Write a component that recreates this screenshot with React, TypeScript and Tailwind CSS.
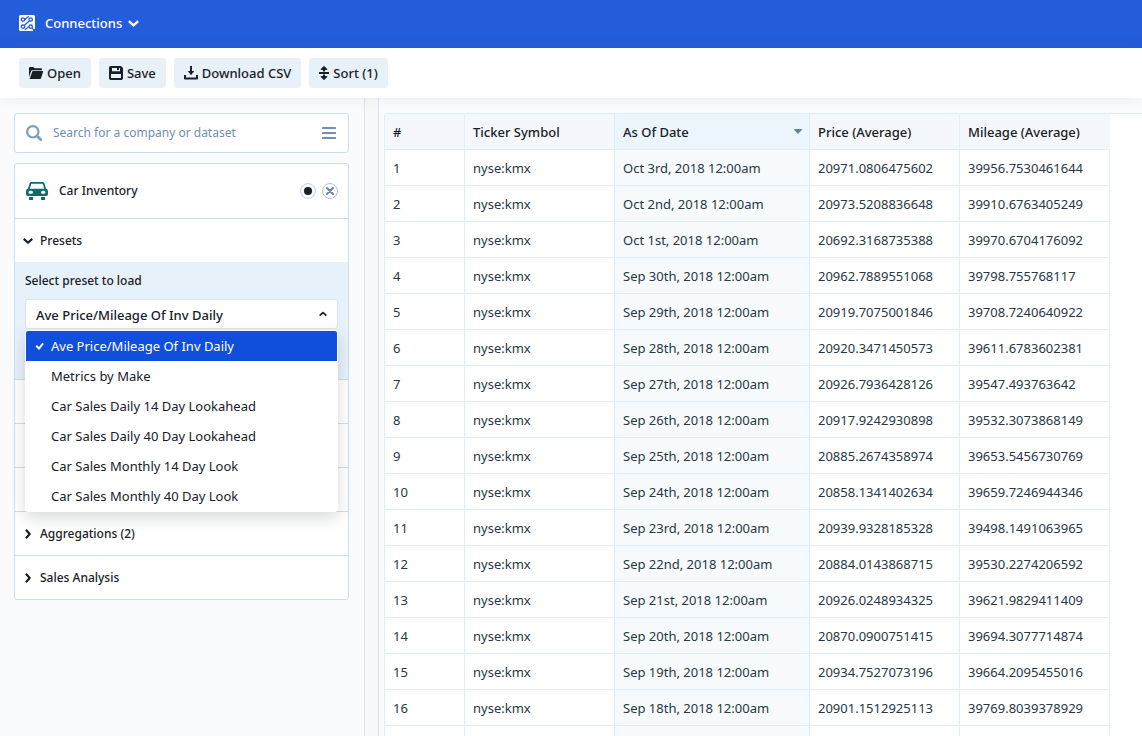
import React, { useState } from "react";
import clsx from "clsx";

type IconProps = { className?: string };

function LogoIcon({ className }: IconProps) {
  return (
    <svg viewBox="0 0 16 16" className={className} aria-hidden="true">
      <path fill="#fff" d="M1.500 0h13A1.500 1.500 0 0 1 16 1.500V14h-2v2H1.500A1.500 1.500 0 0 1 0 14.500v-13A1.500 1.500 0 0 1 1.500 0Z" />
      <g fill="none" stroke="#245dd9" strokeWidth="1.300">
        <circle cx="4" cy="4.500" r="1.700" />
        <circle cx="11.700" cy="4.500" r="1.700" />
        <circle cx="4" cy="11.700" r="1.700" />
        <circle cx="11.700" cy="11.700" r="1.700" />
        <path d="M5.700 4.500C7.600 4.500 7.500 1.600 10 1.600M5.300 10.500l5.100-4.800M10 11.700c-1.900 0-1.800 2.800-4.300 2.800M12.900 12.900l2.600 2.600" />
      </g>
    </svg>
  );
}

function Chevron({ className }: IconProps) {
  return (
    <svg viewBox="0 0 10 10" className={className} fill="none" stroke="currentColor" strokeWidth="2.200" strokeLinejoin="round" aria-hidden="true">
      <path d="M.8 2.900 5 6.700l4.200-3.800" />
    </svg>
  );
}

function FolderIcon({ className }: IconProps) {
  return (
    <svg viewBox="0 0 14 12" className={className} fill="currentColor" aria-hidden="true">
      <path d="M0 1a1 1 0 0 1 1-1h3.300l1.500 1.200H12a1 1 0 0 1 1 1V3.200H3.300a1.200 1.200 0 0 0-1.100.8L0 10Z" />
      <path d="M3.500 4.100h10c.4 0 .6.400.5.800l-2 6.300a1 1 0 0 1-.9.800H.6Z" />
    </svg>
  );
}

function SaveIcon({ className }: IconProps) {
  return (
    <svg viewBox="0 0 14 14" className={className} aria-hidden="true">
      <path fill="currentColor" fillRule="evenodd" d="M1.800 0h10L14 2v10.200a1.800 1.800 0 0 1-1.800 1.800H1.800A1.800 1.800 0 0 1 0 12.200V1.800A1.800 1.800 0 0 1 1.800 0ZM3 2v3.200h8V2h-1v2H8V2ZM2 8v4h10V8Z" />
    </svg>
  );
}

function DownloadIcon({ className }: IconProps) {
  return (
    <svg viewBox="0 0 14 14" className={className} fill="none" stroke="currentColor" strokeWidth="2" aria-hidden="true">
      <path d="M7 0v6" />
      <path fill="currentColor" stroke="none" d="M3.800 5h6.400L7 9.200Z" />
      <path strokeLinejoin="round" d="M1 9v3.500h12V9" />
    </svg>
  );
}

function SortIcon({ className }: IconProps) {
  return (
    <svg viewBox="0 0 10 14" className={className} fill="currentColor" aria-hidden="true">
      <path d="M4.600.2a.6.600 0 0 1 .8 0l2.800 2.900c.3.400.1.900-.4.900H6v1.500H4V4H2.200c-.5 0-.7-.5-.4-.9ZM0 6h10v2H0ZM4 8.500h2V10h1.800c.5 0 .7.500.4.900l-2.800 2.900a.6.600 0 0 1-.8 0l-2.800-2.900c-.3-.4-.1-.9.400-.9H4Z" />
    </svg>
  );
}

function SearchIcon({ className }: IconProps) {
  return (
    <svg viewBox="0 0 16 16" className={className} fill="none" stroke="currentColor" aria-hidden="true">
      <circle cx="6.800" cy="6.800" r="5.700" strokeWidth="2.200" />
      <path d="m11 11 3.600 3.600" strokeWidth="2.800" strokeLinecap="round" />
    </svg>
  );
}

function MenuIcon({ className }: IconProps) {
  return (
    <svg viewBox="0 0 14 12" className={className} fill="currentColor" aria-hidden="true">
      <rect width="14" height="2" rx=".5" />
      <rect y="5" width="14" height="2" rx=".5" />
      <rect y="10" width="14" height="2" rx=".5" />
    </svg>
  );
}

function CarIcon({ className }: IconProps) {
  return (
    <svg viewBox="0 0 22 18" className={className} fill="currentColor" aria-hidden="true">
      <path fillRule="evenodd" d="M5.500 0h11a2 2 0 0 1 1.900 1.300L20 6.400a3 3 0 0 1 2 2.800V12a2 2 0 0 1-2 2H2a2 2 0 0 1-2-2V9.200a3 3 0 0 1 2-2.800l1.600-5.100A2 2 0 0 1 5.500 0Zm.2 1.800a.6.600 0 0 0-.6.400L3.800 6.800h14.400l-1.300-4.600a.6.600 0 0 0-.6-.4ZM4 8.800a1.500 1.500 0 1 0 0 3h1.500a1.500 1.500 0 0 0 0-3Zm12.500 0a1.500 1.500 0 0 0 0 3H18a1.500 1.500 0 0 0 0-3Z" />
      <path d="M3 15h4v3H3zM15 15h4v3h-4z" />
    </svg>
  );
}

const presets = [
  "Ave Price/Mileage Of Inv Daily",
  "Metrics by Make",
  "Car Sales Daily 14 Day Lookahead",
  "Car Sales Daily 40 Day Lookahead",
  "Car Sales Monthly 14 Day Look",
  "Car Sales Monthly 40 Day Look",
];

const rows: [string, string, string][] = [
  ["Oct 3rd, 2018 12:00am", "20971.0806475602", "39956.7530461644"],
  ["Oct 2nd, 2018 12:00am", "20973.5208836648", "39910.6763405249"],
  ["Oct 1st, 2018 12:00am", "20692.3168735388", "39970.6704176092"],
  ["Sep 30th, 2018 12:00am", "20962.7889551068", "39798.755768117"],
  ["Sep 29th, 2018 12:00am", "20919.7075001846", "39708.7240640922"],
  ["Sep 28th, 2018 12:00am", "20920.3471450573", "39611.6783602381"],
  ["Sep 27th, 2018 12:00am", "20926.7936428126", "39547.493763642"],
  ["Sep 26th, 2018 12:00am", "20917.9242930898", "39532.3073868149"],
  ["Sep 25th, 2018 12:00am", "20885.2674358974", "39653.5456730769"],
  ["Sep 24th, 2018 12:00am", "20858.1341402634", "39659.7246944346"],
  ["Sep 23rd, 2018 12:00am", "20939.9328185328", "39498.1491063965"],
  ["Sep 22nd, 2018 12:00am", "20884.0143868715", "39530.2274206592"],
  ["Sep 21st, 2018 12:00am", "20926.0248934325", "39621.9829411409"],
  ["Sep 20th, 2018 12:00am", "20870.0900751415", "39694.3077714874"],
  ["Sep 19th, 2018 12:00am", "20934.7527073196", "39664.2095455016"],
  ["Sep 18th, 2018 12:00am", "20901.1512925113", "39769.8039378929"],
];

function ToolButton({ icon, children }: { icon: React.ReactNode; children: React.ReactNode }) {
  return (
    <button type="button" className="flex h-[30px] items-center gap-1 rounded-[3px] bg-[#e9f1f8] px-[10px] pb-px font-medium text-[#182026]">
      {icon}
      {children}
    </button>
  );
}

const sectionHeader =
  "flex h-11 w-full items-center gap-[7px] border-t border-[#cbdfee] pl-2 text-left text-xs font-medium text-[#182026]";

function Section({ label, children }: { label?: string; children?: React.ReactNode }) {
  return (
    <button type="button" aria-label={label} className={sectionHeader}>
      {children && <Chevron className="size-[10px] -rotate-90" />}
      {children}
    </button>
  );
}

function PresetPicker() {
  const [selected, setSelected] = useState(presets[0]);
  return (
    <div className="h-[117px] bg-[#e7f1fa] px-[10px] pt-[11px]">
      <label htmlFor="preset" className="block text-xs leading-4 font-medium text-[#182026]">
        Select preset to load
      </label>
      <div className="relative mt-[10px]">
        <select
          id="preset"
          value={selected}
          onChange={(e) => setSelected(e.target.value)}
          className="block h-[30px] w-full appearance-none rounded-[3px] border border-[#d8e6f0] bg-white px-[10px] pt-[2px] font-medium text-[#182026] outline-none"
        >
          {presets.map((p) => (
            <option key={p}>{p}</option>
          ))}
        </select>
        <Chevron className="pointer-events-none absolute top-[11px] right-[11px] size-2 rotate-180 text-[#182026]" />
        <div
          role="listbox"
          aria-label="Presets"
          className="absolute inset-x-0 top-[31px] z-10 overflow-hidden rounded-[3px] bg-white p-px shadow-[0_6px_16px_rgba(16,22,26,0.16)]"
        >
          {presets.map((p) => (
            <button
              key={p}
              type="button"
              role="option"
              aria-selected={p === selected}
              onClick={() => setSelected(p)}
              className={clsx(
                "flex h-[30px] w-full items-center gap-1 pl-[9px] text-left",
                p === selected ? "rounded-t-[2px] bg-[#104fdb] text-white" : "text-[#182026]",
              )}
            >
              <svg viewBox="0 0 12 12" className="size-3" fill="none" aria-hidden="true">
                {p === selected && <path d="m1.800 6.300 2.200 2.300 3.600-4.600" stroke="#fff" strokeWidth="2" strokeLinecap="round" strokeLinejoin="round" />}
              </svg>
              {p}
            </button>
          ))}
        </div>
      </div>
    </div>
  );
}

function Sidebar() {
  return (
    <aside className="w-[365px] shrink-0 border-r border-[#e1e3e6] pt-[15px] pr-[15px] pl-[14px]">
      <div className="flex h-10 items-center rounded-[3px] border border-[#c9e0f0] bg-white pr-3 pl-[11px]">
        <SearchIcon className="size-4 shrink-0 text-[#7b9fbd]" />
        <input
          type="search"
          aria-label="Search for a company or dataset"
          placeholder="Search for a company or dataset"
          className="ml-[11px] min-w-0 flex-1 bg-transparent text-xs outline-none placeholder:text-[#738db0]"
        />
        <button type="button" aria-label="Menu" className="text-[#738db5]">
          <MenuIcon className="h-3 w-[14px]" />
        </button>
      </div>

      <div className="mt-[10px] rounded-[3px] border border-[#c9e0f0] bg-white">
        <div className="flex h-[54px] items-center pr-[10px] pl-[11px]">
          <CarIcon className="h-[18px] w-[22px] text-[#0d6b69]" />
          <h2 className="ml-[11px] flex-1 text-xs font-medium text-[#182026]">Car Inventory</h2>
          <button type="button" aria-label="Colour" className="mr-[6px] flex size-4 items-center justify-center rounded-full border border-[#c3d6e6] bg-[#f3f7fb]">
            <span className="size-2 rounded-full bg-[#182026]" />
          </button>
          <button type="button" aria-label="Remove" className="flex size-4 items-center justify-center rounded-full border border-[#a9c3d9] text-[#6683a8]">
            <svg viewBox="0 0 8 8" className="size-2" stroke="currentColor" strokeWidth="2" strokeLinecap="round" aria-hidden="true">
              <path d="m1 1 6 6M7 1 1 7" />
            </svg>
          </button>
        </div>
        <button type="button" aria-expanded="true" className={sectionHeader}>
          <Chevron className="size-[10px]" />
          Presets
        </button>
        <PresetPicker />
        <Section label="Columns" />
        <Section label="Filters" />
        <Section label="Groups" />
        <Section>Aggregations (2)</Section>
        <Section>Sales Analysis</Section>
      </div>
    </aside>
  );
}

const th = "border-r border-b border-[#e0eef8] px-2 text-left font-medium";
const td = "border-r border-b border-[#e0eef8] px-2";

function DataTable() {
  return (
    <div className="min-h-0 rounded-tl-[3px] border-t border-l border-[#e0eef8] bg-white">
      <table className="w-[725px] table-fixed border-separate border-spacing-0 text-[#293742]">
        <colgroup>
          <col className="w-20" />
          <col className="w-[150px]" />
          <col className="w-[195px]" />
          <col className="w-[150px]" />
          <col className="w-[150px]" />
        </colgroup>
        <thead>
          <tr className="h-9 bg-[#f4f8fc] text-[#182026]">
            <th className={th}>#</th>
            <th className={th}>Ticker Symbol</th>
            <th className={clsx(th, "bg-[#ebf5fb]")} aria-sort="descending">
              <span className="flex items-center justify-between">
                As Of Date
                <svg viewBox="0 0 8 5" className="-mr-px h-[5px] w-2 text-[#6683a8]" fill="currentColor" aria-hidden="true">
                  <path d="M.6 0h6.800a.5.500 0 0 1 .4.900L4.500 4.500a.7.700 0 0 1-1 0L.2.900A.5.500 0 0 1 .6 0Z" />
                </svg>
              </span>
            </th>
            <th className={th}>Price (Average)</th>
            <th className={clsx(th, "border-r-[#f4f8fc]")}>Mileage (Average)</th>
          </tr>
        </thead>
        <tbody>
          {rows.map(([date, price, mileage], i) => (
            <tr key={date} className="h-9">
              <td className={td}>{i + 1}</td>
              <td className={td}>nyse:kmx</td>
              <td className={clsx(td, "bg-[#f6fafd]")}>{date}</td>
              <td className={td}>{price}</td>
              <td className={td}>{mileage}</td>
            </tr>
          ))}
          <tr className="h-9">
            <td className={td} />
            <td className={td} />
            <td className={clsx(td, "bg-[#f6fafd]")} />
            <td className={td} />
            <td className={td} />
          </tr>
        </tbody>
      </table>
    </div>
  );
}

export default function App() {
  return (
    <div className="flex h-screen flex-col overflow-hidden bg-[#f9fbfd] font-['Noto_Sans',sans-serif] text-[13px] leading-5">
      <header className="flex h-12 shrink-0 items-center bg-[#245dd9] px-[19px] pb-[2px] text-white">
        <LogoIcon className="size-4" />
        <button type="button" className="ml-[10px] flex items-center gap-[6px] font-medium">
          Connections
          <Chevron className="size-[11px]" />
        </button>
      </header>
      <div className="relative z-20 flex h-[50px] shrink-0 items-center gap-2 bg-white px-[19px] shadow-[0_0_15px_rgba(40,50,90,0.08)]">
        <ToolButton icon={<FolderIcon className="h-3 w-[14px]" />}>Open</ToolButton>
        <ToolButton icon={<SaveIcon className="size-[14px]" />}>Save</ToolButton>
        <ToolButton icon={<DownloadIcon className="size-[14px]" />}>Download CSV</ToolButton>
        <ToolButton icon={<SortIcon className="h-[14px] w-[10px]" />}>Sort (1)</ToolButton>
      </div>
      <div className="flex min-h-0 flex-1">
        <Sidebar />
        <div className="w-[14px] shrink-0 border-r border-[#e1e3e6] bg-[#f8f8f8]" />
        <main className="min-w-0 flex-1 overflow-hidden pt-[15px] pl-[5px]">
          <DataTable />
        </main>
      </div>
    </div>
  );
}
